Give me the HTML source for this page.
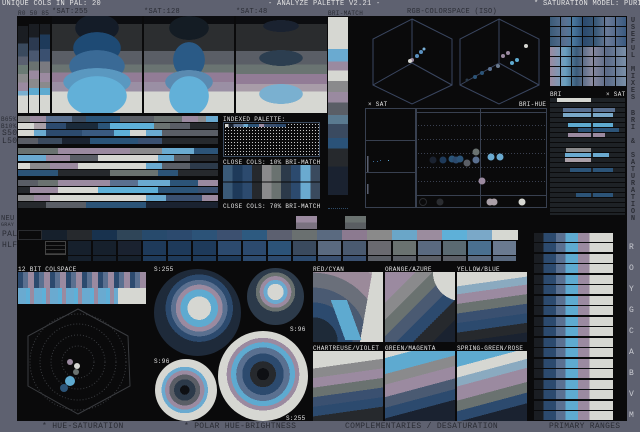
<!DOCTYPE html>
<html><head><meta charset="utf-8"><style>
*{margin:0;padding:0;box-sizing:border-box}
body{width:640px;height:432px;background:#5e6170;position:relative;overflow:hidden;font-family:"Liberation Mono",monospace;font-size:7px;line-height:7px;color:#e4e4e4;text-transform:uppercase}
.a{position:absolute}
.t{position:absolute;white-space:nowrap;letter-spacing:0.3px}
.k{background:#0a0a0b}
.d{color:#2a2c34}
.v{position:absolute;writing-mode:vertical-rl;text-orientation:upright;color:#2c2e36;font-size:7px;letter-spacing:-1px;font-weight:bold}
</style></head><body>
<!-- header -->
<div class="t" style="left:2px;top:1px">Unique cols in pal: 20</div>
<div class="t" style="left:268px;top:1px">- Analyze palette v2.21 -</div>
<div class="t" style="left:534px;top:1px">* Saturation model: purity</div>
<div class="t d" style="left:18px;top:10px;font-size:6px">R0 50 85</div>
<div class="t d" style="left:52px;top:9px">*SAT:255</div>
<div class="t d" style="left:144px;top:9px">*SAT:128</div>
<div class="t d" style="left:236px;top:9px">*SAT:48</div>
<div class="t d" style="left:328px;top:10px;font-size:6px">bRI-MATCH</div>
<div class="t d" style="left:407px;top:9px">RGB-COLORSPACE (ISO)</div>

<!-- main black panel -->
<div class="a k" style="left:17px;top:16px;width:610px;height:405px"></div>

<!-- left narrow strips -->
<div class="a" style="left:18px;top:26px;width:10px;height:87px;background:linear-gradient(#1a1d22 0 20%,#3a4a5e 20% 35%,#5a6070 35% 45%,#6a7a74 45% 55%,#8a8a8c 55% 65%,#9a8aa0 65% 75%,#7ab0d0 75% 80%,#d6d7d2 80%)"></div>
<div class="a" style="left:29px;top:24px;width:10px;height:89px;background:linear-gradient(#1a1d22 0 15%,#2c3a50 15% 30%,#4a5870 30% 42%,#6a7270 42% 52%,#9a8aa0 52% 62%,#8a8a8c 62% 72%,#5eaad0 72% 80%,#d6d7d2 80%)"></div>
<div class="a" style="left:40px;top:24px;width:10px;height:89px;background:linear-gradient(#1a1d22 0 12%,#1e3a5a 12% 28%,#3a5070 28% 42%,#7a7a80 42% 55%,#9b8aa0 55% 65%,#8a8a8c 65% 72%,#5eaad0 72% 80%,#d6d7d2 80%)"></div>

<!-- sat images -->
<div class="a" style="left:52px;top:16px;width:90px;height:97px;background:
radial-gradient(ellipse 30px 20px at 45px 80px,#62b0d8 98%,transparent 100%),
radial-gradient(ellipse 34px 14px at 45px 66px,#5a98c0 98%,transparent 100%),
radial-gradient(ellipse 28px 16px at 45px 50px,#3a6a96 98%,transparent 100%),
radial-gradient(ellipse 24px 16px at 45px 32px,#1e4a74 98%,transparent 100%),
radial-gradient(ellipse 22px 14px at 45px 12px,#141c28 98%,transparent 100%),
linear-gradient(#0c0d10 0 8%,#2c2e30 8% 36%,#5a5e66 36% 50%,#6a7472 50% 58%,#927c96 58% 68%,#9a8fa4 68% 78%,#d6d7d2 78%)"></div>
<div class="a" style="left:144px;top:16px;width:90px;height:97px;background:
radial-gradient(ellipse 20px 20px at 45px 80px,#62b0d8 98%,transparent 100%),
radial-gradient(ellipse 24px 12px at 45px 66px,#5a8ab0 98%,transparent 100%),
radial-gradient(ellipse 16px 18px at 45px 44px,#2a5a86 98%,transparent 100%),
radial-gradient(ellipse 20px 12px at 45px 12px,#141c24 98%,transparent 100%),
linear-gradient(#0c0d10 0 8%,#2c2e30 8% 36%,#5a5e66 36% 50%,#6a7472 50% 58%,#927c96 58% 68%,#9a8fa4 68% 78%,#d6d7d2 78%)"></div>
<div class="a" style="left:236px;top:16px;width:91px;height:97px;background:
radial-gradient(ellipse 22px 10px at 45px 78px,#7ab0d0 98%,transparent 100%),
radial-gradient(ellipse 22px 8px at 45px 42px,#2c3e50 98%,transparent 100%),
radial-gradient(ellipse 18px 6px at 45px 10px,#1a2230 98%,transparent 100%),
linear-gradient(#0c0d10 0 8%,#2a2c2e 8% 36%,#5a5e66 36% 50%,#6a7472 50% 60%,#927c96 60% 70%,#a89ca8 70% 78%,#d6d7d2 78%)"></div>

<!-- bri match -->
<div class="a" style="left:328px;top:17px;width:20px;height:178px;background:linear-gradient(#d6d7d2 0 18%,#6aaad0 18% 25%,#9a8aa0 25% 30%,#d6d7d2 30% 36%,#8a8a8c 36% 42%,#9a8aa0 42% 48%,#5a5e66 48% 55%,#5a7a90 55% 60%,#3a4a60 60% 68%,#2a5278 68% 74%,#26292d 74% 84%,#1a2230 84%)"></div>
<div class="a" style="left:328px;top:208px;width:20px;height:1px;border-top:1px dotted #2e4a66"></div>

<!-- labels left -->
<div class="t d" style="left:1px;top:116px;font-size:6px">b65%</div>
<div class="t d" style="left:1px;top:123px;font-size:6px">b10%</div>
<div class="t d" style="left:2px;top:130px;font-size:8px">S50</div>
<div class="t d" style="left:2px;top:138px;font-size:8px">L50</div>
<div class="t d" style="left:1px;top:216px;font-size:7px;line-height:6px">NEU<br><span style="font-size:5px">GRAY</span></div>
<div class="t d" style="left:2px;top:231px;font-size:8px">PAL</div>
<div class="t d" style="left:2px;top:242px;font-size:8px">HLF</div>

<!-- band rows -->
<div class="a" style="left:18px;top:116px;width:200px;height:6px;background:linear-gradient(90deg,#8a8a8c 0 6%,#9b8aa0 6% 14%,#5a7090 14% 27%,#3a4a5e 27% 34%,#2a5478 34% 51%,#5a5e66 51% 68%,#6a7270 68% 82%,#9b8aa0 82% 90%,#8a8a8c 90% 94%,#6aaad0 94%)"></div>
<div class="a" style="left:18px;top:123px;width:200px;height:6px;background:linear-gradient(90deg,#d6d7d2 0 8%,#aaa0a8 8% 14%,#2c4a6e 14% 24%,#1a2a3a 24% 40%,#2a5478 40% 46%,#5eb0d8 46% 68%,#6a7270 68% 76%,#5a5e66 76% 86%,#26292d 86% 100%)"></div>
<div class="a" style="left:18px;top:130px;width:200px;height:6px;background:linear-gradient(90deg,#d6d7d2 0 8%,#6aaad0 8% 14%,#2c4a6e 14% 32%,#3a5a80 32% 48%,#5eb0d8 48% 56%,#d6d7d2 56% 64%,#6aaad0 64% 72%,#5a5e66 72% 100%)"></div>
<div class="a" style="left:18px;top:138px;width:200px;height:6px;background:linear-gradient(90deg,#5a5e66 0 10%,#3a4a5e 10% 22%,#1a2230 22% 36%,#2a5478 36% 60%,#3a5070 60% 72%,#26292d 72% 100%)"></div>
<div class="a" style="left:18px;top:148px;width:200px;height:6px;background:linear-gradient(90deg,#6a7270 0 20%,#9b8aa0 20% 56%,#8a8a8c 56% 72%,#6aaad0 72% 88%,#2c5478 88%)"></div>
<div class="a" style="left:18px;top:155px;width:200px;height:6px;background:linear-gradient(90deg,#6aaad0 0 14%,#9b8aa0 14% 26%,#5a5e66 26% 40%,#d6d7d2 40% 70%,#6aaad0 70% 78%,#5a5e66 78% 86%,#26292d 86% 100%)"></div>
<div class="a" style="left:18px;top:163px;width:200px;height:6px;background:linear-gradient(90deg,#d6d7d2 0 6%,#8a8a8c 6% 16%,#9b8aa0 16% 30%,#d6d7d2 30% 64%,#6aaad0 64% 72%,#5a5e66 72% 86%,#2c3a4a 86% 100%)"></div>
<div class="a" style="left:18px;top:170px;width:200px;height:6px;background:linear-gradient(90deg,#2c5478 0 20%,#26292d 20% 46%,#6a7270 46% 70%,#2c5478 70% 80%,#26292d 80% 100%)"></div>
<div class="a" style="left:18px;top:180px;width:200px;height:6px;background:linear-gradient(90deg,#5a5e66 0 10%,#6a7270 10% 20%,#9b8aa0 20% 46%,#5a7090 46% 60%,#6aaad0 60% 76%,#2c5478 76% 90%,#9b8aa0 90%)"></div>
<div class="a" style="left:18px;top:187px;width:200px;height:6px;background:linear-gradient(90deg,#26292d 0 6%,#9b8aa0 6% 20%,#d6d7d2 20% 40%,#5eb0d8 40% 70%,#2c5478 70% 90%,#3a5070 90%)"></div>
<div class="a" style="left:18px;top:195px;width:200px;height:6px;background:linear-gradient(90deg,#8a8a8c 0 8%,#9b8aa0 8% 16%,#d6d7d2 16% 64%,#6aaad0 64% 74%,#3a5070 74% 92%,#9b8aa0 92%)"></div>
<div class="a" style="left:18px;top:202px;width:200px;height:6px;background:linear-gradient(90deg,#26292d 0 14%,#5a5e66 14% 34%,#2c5478 34% 64%,#1a2230 64% 100%)"></div>

<!-- indexed palette -->
<div class="t" style="left:223px;top:116px;font-size:6px">Indexed palette:</div>
<div class="a" style="left:223px;top:122px;width:97px;height:35px;border:1px solid #3a4a5e;background:radial-gradient(circle,#c8c8c8 0.5px,transparent 0.8px) 0 0/3px 3px #0a0a0b"></div>
<div class="a" style="left:225px;top:124px;width:61px;height:3px;background:linear-gradient(90deg,#d6d7d2 0 6%,#1a2230 6% 14%,#5a7090 14% 30%,#6aaad0 30% 38%,#2c5478 38% 56%,#9b8aa0 56% 64%,#3a5070 64% 84%,#2c4a6e 84%)"></div>
<div class="t" style="left:223px;top:159px;font-size:6px">Close cols: 10% bRI-MATCH</div>
<div class="a" style="left:223px;top:165px;width:97px;height:34px;background:linear-gradient(transparent 48%,#0a0a0b 48% 52%,transparent 52%),linear-gradient(90deg,#3a5a78 0 10%,#1e3a5a 10% 20%,#2c4a6e 20% 30%,#26292d 30% 40%,#8a8a8c 40% 50%,#6a7270 50% 60%,#2c3a4a 60% 70%,#2c4a6e 70% 80%,#6aaad0 80% 90%,#3a4a5e 90%)"></div>
<div class="t" style="left:223px;top:203px;font-size:6px">Close cols: 70% bRI-MATCH</div>

<!-- 3D colorspace + plots -->
<svg class="a" style="left:360px;top:16px" width="190" height="195" viewBox="0 0 190 195">
<g fill="none" stroke="#3a4660" stroke-width="1">
<polygon points="52,3 92,23 92,69 52,88 13,69 13,23"/><path d="M52,3V47L13,69M52,47L92,69"/>
<polygon points="139,3 179,23 179,69 139,88 100,69 100,23"/><path d="M139,3V47L100,69M139,47L179,69"/>
</g>
<g fill="#5a90c0"><circle cx="64" cy="33" r="1.5" fill="#7ab0d8"/><circle cx="61" cy="36" r="2"/><circle cx="57" cy="40" r="2"/><circle cx="52" cy="44" r="2" fill="#9b8aa0"/><circle cx="50" cy="45" r="2" fill="#d6d7d2"/></g>
<g fill="#2c5478"><circle cx="107" cy="64" r="1.5" fill="#2a3a4a"/><circle cx="115" cy="61" r="2"/><circle cx="122" cy="57" r="2"/><circle cx="130" cy="53" r="2" fill="#5a7090"/><circle cx="138" cy="50" r="2" fill="#6a7a90"/><circle cx="143" cy="40" r="2" fill="#9b8aa0"/><circle cx="148" cy="37" r="2" fill="#9b8aa0"/><circle cx="152" cy="47" r="2" fill="#5eaad0"/><circle cx="157" cy="44" r="2" fill="#5eaad0"/><circle cx="166" cy="30" r="2" fill="#d6d7d2"/></g>
<g fill="none" stroke="#384050"><rect x="5.5" y="92.5" width="50" height="99"/><rect x="56.5" y="92.5" width="130" height="99"/><line x1="120.5" y1="92" x2="120.5" y2="192"/><line x1="57" y1="96.5" x2="186" y2="96.5"/><line x1="57" y1="179.5" x2="186" y2="179.5"/><line x1="6" y1="124.5" x2="55" y2="124.5"/><line x1="6" y1="156.5" x2="55" y2="156.5"/></g>
<g stroke="#3a4050" stroke-dasharray="1,2"><line x1="58" y1="109.5" x2="185" y2="109.5"/><line x1="58" y1="123.5" x2="185" y2="123.5"/><line x1="58" y1="137.5" x2="185" y2="137.5"/><line x1="58" y1="151.5" x2="185" y2="151.5"/><line x1="58" y1="165.5" x2="185" y2="165.5"/></g>
<rect x="7" y="140" width="1.5" height="16" fill="#5a6070"/><rect x="7" y="168" width="1.5" height="10" fill="#5a6070"/>
<g fill="#3a6a96"><rect x="13" y="145" width="1" height="1"/><rect x="17" y="145" width="1" height="1"/><rect x="20" y="144" width="1" height="1"/><rect x="28" y="144" width="1" height="1" fill="#5eaad0"/></g>
<g><circle cx="73" cy="144" r="3.5" fill="#1a2230"/><circle cx="83" cy="144" r="3.5" fill="#1e3a5a"/><circle cx="92" cy="143" r="3.5" fill="#2a5478"/><circle cx="96" cy="144" r="3.5" fill="#2c4a6e"/><circle cx="100" cy="143" r="3.5" fill="#2c5478"/><circle cx="107" cy="147" r="3.5" fill="#5a5e66"/><circle cx="116" cy="136" r="3.5" fill="#6a7270"/><circle cx="116" cy="144" r="3.5" fill="#5a7090"/><circle cx="131" cy="141" r="3.5" fill="#6aaad0"/><circle cx="140" cy="141" r="3.5" fill="#6aaad0"/><circle cx="122" cy="165" r="3.5" fill="#9b8aa0"/><circle cx="130" cy="186" r="3.5" fill="#aaa0a8"/><circle cx="134" cy="186" r="3.5" fill="#aaa0a8"/><circle cx="162" cy="186" r="3.5" fill="#d6d7d2"/><circle cx="80" cy="186" r="3.5" fill="#2a2c30"/><circle cx="63" cy="186" r="3.5" fill="none" stroke="#2a2c30"/></g>
</svg>
<div class="t" style="left:368px;top:101px;font-size:6px">× SAT</div>
<div class="t" style="left:519px;top:101px;font-size:6px">bRI-hUE</div>

<!-- useful mixes -->
<div class="a" style="left:550px;top:17px;width:76px;height:70px;background:repeating-linear-gradient(90deg,transparent 0 10px,#0a0a0b 10px 11px),repeating-linear-gradient(transparent 0 9px,#0a0a0b 9px 10px),linear-gradient(90deg,#3a5a78,#5a7090 20%,#4a7aa0 30%,#2c4a6e 45%,#3a5a78 60%,#6a7a98 75%,#3a5a80)"></div>
<div class="a" style="left:550px;top:47px;width:76px;height:40px;background:repeating-linear-gradient(90deg,transparent 0 10px,#0a0a0b 10px 11px),repeating-linear-gradient(transparent 0 9px,#0a0a0b 9px 10px),linear-gradient(90deg,#9b8aa0,#6aa0c0 20%,#3a5a78 35%,#8a8aa0 55%,#5a6a88 75%,#7a90a8)"></div>
<div class="t" style="left:550px;top:91px;font-size:6px">bRI</div>
<div class="t" style="left:606px;top:91px;font-size:6px">× SAT</div>
<div class="a" style="left:550px;top:98px;width:75px;height:117px;background:repeating-linear-gradient(#1e2226 0 4px,#0a0a0b 4px 5px)"></div>
<div class="a" style="left:557px;top:98px;width:34px;height:4px;background:#d6d7d2"></div>
<div class="a" style="left:563px;top:108px;width:28px;height:4px;background:#5a7090"></div><div class="a" style="left:593px;top:108px;width:22px;height:4px;background:#5a7090"></div>
<div class="a" style="left:563px;top:113px;width:28px;height:4px;background:#7aa8c8"></div><div class="a" style="left:593px;top:113px;width:20px;height:4px;background:#7aa8c8"></div>
<div class="a" style="left:568px;top:123px;width:23px;height:4px;background:#5eaad0"></div><div class="a" style="left:593px;top:123px;width:20px;height:4px;background:#5eaad0"></div>
<div class="a" style="left:578px;top:128px;width:13px;height:4px;background:#2c5478"></div><div class="a" style="left:593px;top:128px;width:26px;height:4px;background:#2c5478"></div>
<div class="a" style="left:568px;top:133px;width:23px;height:4px;background:#9b8aa0"></div><div class="a" style="left:593px;top:133px;width:12px;height:4px;background:#9b8aa0"></div>
<div class="a" style="left:566px;top:148px;width:25px;height:4px;background:#8a8a8c"></div>
<div class="a" style="left:565px;top:153px;width:26px;height:4px;background:#6aaad0"></div><div class="a" style="left:593px;top:153px;width:16px;height:4px;background:#6aaad0"></div>
<div class="a" style="left:565px;top:158px;width:26px;height:4px;background:#aaa0a8"></div>
<div class="a" style="left:570px;top:168px;width:21px;height:4px;background:#2c5478"></div><div class="a" style="left:593px;top:168px;width:20px;height:4px;background:#2c5478"></div>
<div class="a" style="left:576px;top:193px;width:15px;height:4px;background:#2c5478"></div><div class="a" style="left:593px;top:193px;width:20px;height:4px;background:#2c5478"></div>
<div class="v" style="left:629px;top:17px">USEFUL MIXES</div>
<div class="v" style="left:629px;top:110px">BRI &amp; SATURATION</div>

<!-- neu gray swatches -->
<div class="a" style="left:296px;top:216px;width:21px;height:13px;background:linear-gradient(#9b8aa0 0 50%,#7a7280 50%)"></div>
<div class="a" style="left:345px;top:216px;width:21px;height:13px;background:linear-gradient(#6a7270 0 50%,#5a5e62 50%)"></div>
<!-- PAL row -->
<div class="a" style="left:18px;top:230px;width:500px;height:10px;background:linear-gradient(90deg,#0a0a0b 0 24px,#16202c 24px 49px,#26292d 49px 74px,#18324e 74px 99px,#2f4558 99px 124px,#274a6c 124px 149px,#2c4a6e 149px 174px,#2c5378 174px 199px,#3c5070 199px 224px,#2d5a80 224px 249px,#5c6070 249px 274px,#6a7070 274px 299px,#5a6a80 299px 324px,#8c7a90 324px 349px,#8a8a8a 349px 374px,#6aa6c8 374px 399px,#9b8c9e 399px 424px,#5eb0d8 424px 449px,#7aa8c8 449px 474px,#d6d8d2 474px)"></div>
<div class="a" style="left:18px;top:230px;width:24px;height:10px;border:1px solid #2a2c30"></div>
<!-- HLF row -->
<div class="a" style="left:68px;top:241px;width:450px;height:14px;background:repeating-linear-gradient(90deg,transparent 0 23px,#0a0a0b 23px 25px),linear-gradient(90deg,#16202c 0 50px,#1a2230 50px 75px,#1e3a5a 75px 150px,#2c4a6e 150px 175px,#2c4a6e 175px 200px,#2c5378 200px 225px,#3a4a5e 225px 250px,#5a6a80 250px 275px,#4a5a70 275px 300px,#6a6a70 300px 325px,#6a7270 325px 350px,#5a6a80 350px 375px,#5a6a72 375px 400px,#4a7090 400px 425px,#6a7a90 425px)"></div>
<div class="a" style="left:68px;top:256px;width:450px;height:5px;background:repeating-linear-gradient(90deg,transparent 0 23px,#0a0a0b 23px 25px),linear-gradient(90deg,#16202c 0 75px,#1e3a5a 75px 175px,#2c4a6e 175px 250px,#3a5070 250px 300px,#5a5e66 300px 400px,#5a6a80 400px 450px)"></div>
<div class="a" style="left:45px;top:241px;width:21px;height:14px;border:1px solid #444;background:repeating-linear-gradient(#0a0a0b 0 3px,#333 3px 4px)"></div>

<!-- 12 bit colspace -->
<div class="t" style="left:18px;top:266px;font-size:6px">12 bIT COLSPACE</div>
<div class="a" style="left:18px;top:272px;width:128px;height:32px;background:linear-gradient(transparent 50%,#d6d7d2 50%),repeating-linear-gradient(90deg,#2c4a6e 0 5px,#5a7090 5px 10px,#9b8aa0 10px 16px)"></div>
<div class="a" style="left:18px;top:288px;width:100px;height:16px;background:repeating-linear-gradient(90deg,#6aaad0 0 8px,#5eb0d8 8px 12px,#9b8aa0 12px 16px)"></div>
<svg class="a" style="left:18px;top:306px" width="120" height="112">
<polygon points="60,3 110,30 112,80 60,108 10,80 10,30" fill="none" stroke="#3a3c40"/>
<g fill="none" stroke="#3a3c40" stroke-dasharray="1,2"><circle cx="60" cy="56" r="48"/><circle cx="60" cy="56" r="38"/><circle cx="60" cy="56" r="27"/><circle cx="60" cy="56" r="16"/></g>
<circle cx="52" cy="75" r="5" fill="#5eaad0"/><circle cx="46" cy="82" r="4" fill="#2c5478"/><circle cx="52" cy="56" r="3" fill="#9b8aa0"/><circle cx="59" cy="60" r="3" fill="#d6d7d2"/><circle cx="58" cy="66" r="3" fill="#6a7270"/>
</svg>

<!-- polar -->
<div class="t" style="left:154px;top:266px;font-size:6px">S:255</div>
<div class="a" style="left:154px;top:269px;width:87px;height:87px;border-radius:50%;background:radial-gradient(circle closest-side at 52% 45%,#d6d7d2 0 30%,#5eaad0 30% 48%,#9b8aa0 48% 60%,#5a7090 60% 72%,#2c4a6e 72% 86%,#1e2a3a 86%)"></div>
<div class="a" style="left:247px;top:268px;width:57px;height:57px;border-radius:50%;background:radial-gradient(circle closest-side at 50% 42%,#d6d7d2 0 34%,#6aaad0 34% 50%,#9b8aa0 50% 66%,#6a7270 66% 82%,#2c3a4a 82%)"></div>
<div class="t" style="left:290px;top:326px;font-size:6px">S:96</div>
<div class="t" style="left:154px;top:358px;font-size:6px">S:96</div>
<div class="a" style="left:155px;top:359px;width:62px;height:62px;border-radius:50%;background:radial-gradient(circle closest-side at 48% 50%,#0e1014 0 16%,#2c3a4a 16% 36%,#5a5e66 36% 52%,#9b8aa0 52% 66%,#6aaad0 66% 78%,#d6d7d2 78%)"></div>
<div class="a" style="left:218px;top:331px;width:90px;height:90px;border-radius:50%;background:radial-gradient(circle closest-side at 50% 48%,#0e1014 0 14%,#26292d 14% 30%,#2c4a6e 30% 48%,#5a7090 48% 62%,#5eaad0 62% 74%,#9b8aa0 74% 84%,#d6d7d2 84%)"></div>
<div class="t" style="left:286px;top:415px;font-size:6px">S:255</div>

<!-- complementaries -->
<div class="t" style="left:313px;top:266px;font-size:6px">RED/CYAN</div>
<div class="t" style="left:385px;top:266px;font-size:6px">ORANGE/AZURE</div>
<div class="t" style="left:457px;top:266px;font-size:6px">YELLOW/bLUE</div>
<div class="a" style="left:313px;top:272px;width:70px;height:70px;background:linear-gradient(100deg,transparent 72%,#d6d7d2 72%),radial-gradient(circle at 0 100%,#1e2a38 0 25%,#2c4a6e 25% 40%,#4a5a72 40% 55%,#6a6f7a 55% 70%,#9b8a9a 70% 90%,#aaa0a8 90%)"></div>
<div class="a" style="left:313px;top:300px;width:50px;height:40px;background:linear-gradient(70deg,transparent 50%,#5eaad0 50% 75%,transparent 75%)"></div>
<div class="a" style="left:385px;top:272px;width:70px;height:70px;background:radial-gradient(circle at 110% 0,#d6d7d2 0 28%,transparent 28%),linear-gradient(135deg,#9b8aa0 0 22%,#8a8a8c 22% 34%,#6a7270 34% 46%,#4a5a72 46% 58%,#2c4a6e 58% 70%,#26292d 70% 84%,#1a2230 84%)"></div>
<div class="a" style="left:457px;top:272px;width:70px;height:70px;background:linear-gradient(172deg,#d6d7d2 0 18%,#8aaac0 18% 28%,#9b8aa0 28% 40%,#6a7270 40% 52%,#3a5070 52% 64%,#2c4a6e 64% 76%,#26292d 76% 88%,#1a2230 88%)"></div>
<div class="t" style="left:313px;top:345px;font-size:6px">CHARTREUSE/VIOLET</div>
<div class="t" style="left:385px;top:345px;font-size:6px">GREEN/MAGENTA</div>
<div class="t" style="left:457px;top:345px;font-size:6px">SPRING-GREEN/ROSE</div>
<div class="a" style="left:313px;top:351px;width:70px;height:70px;background:linear-gradient(172deg,#d6d7d2 0 22%,#8a8a8c 22% 34%,#9b8aa0 34% 46%,#6a7270 46% 58%,#3a5070 58% 70%,#2c4a6e 70% 82%,#26292d 82%)"></div>
<div class="a" style="left:385px;top:351px;width:70px;height:70px;background:linear-gradient(165deg,#d6d7d2 0 8%,#5eaad0 8% 26%,#8a8a8c 26% 38%,#9b8aa0 38% 52%,#4a5a72 52% 64%,#2c4a6e 64% 76%,#1a2230 76%)"></div>
<div class="a" style="left:457px;top:351px;width:70px;height:70px;background:linear-gradient(165deg,#5eaad0 0 18%,#d6d7d2 18% 30%,#8aaac0 30% 40%,#9b8aa0 40% 56%,#6a7270 56% 68%,#2c4a6e 68% 80%,#1a2230 80%)"></div>

<!-- primary ranges -->
<div class="a" style="left:534px;top:233px;width:79px;height:188px;background:repeating-linear-gradient(transparent 0 9px,#0a0a0b 9px 10px,transparent 10px 19px,#0a0a0b 19px 21px),linear-gradient(90deg,#1a1d22 0 12%,#2c4a6e 12% 28%,#5a7090 28% 40%,#5eaad0 40% 56%,#9b8aa0 56% 70%,#d6d7d2 70%)"></div>
<div class="t" style="left:629px;top:237px;line-height:21px;font-size:8px;color:#c8cad0;width:10px;white-space:normal">R O Y G C A B V M</div>

<!-- footer -->
<div class="t d" style="left:42px;top:423px;font-size:8px">* HUE-SATURATION</div>
<div class="t d" style="left:184px;top:423px;font-size:8px">* POLAR HUE-BRIGHTNESS</div>
<div class="t d" style="left:345px;top:423px;font-size:8px">COMPLEMENTARIES / DESATURATION</div>
<div class="t d" style="left:549px;top:423px;font-size:8px">PRIMARY RANGES</div>
</body></html>
